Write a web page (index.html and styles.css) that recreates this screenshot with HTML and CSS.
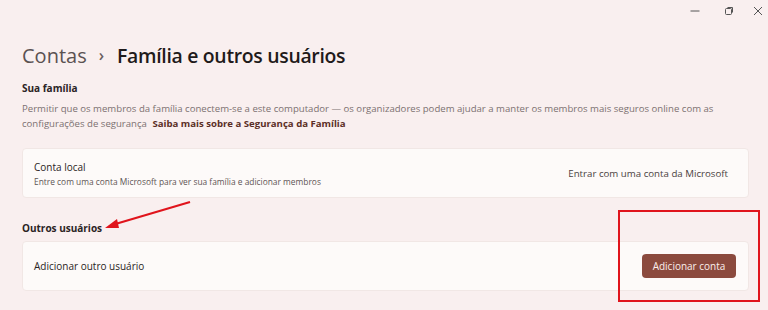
FILE: index.html
```html
<!doctype html>
<html>
<head>
<meta charset="utf-8">
<title>Família e outros usuários</title>
<link rel="stylesheet" href="styles.css">
</head>
<body>
<div class="titlebar">
    <span class="winbtn">
        <svg width="10" height="10" viewBox="0 0 10 10"><path d="M0.5 5H9.5" stroke="#555" stroke-width="1"/></svg>
    </span>
    <span class="winbtn">
        <svg width="10" height="10" viewBox="0 0 10 10"><rect x="1.5" y="2.5" width="6" height="6" rx="1" fill="none" stroke="#555"/><path d="M3.5 1.5H8.5V6.5" fill="none" stroke="#555"/></svg>
    </span>
    <span class="winbtn">
        <svg width="10" height="10" viewBox="0 0 10 10"><path d="M1 1L9 9M9 1L1 9" stroke="#555" stroke-width="1"/></svg>
    </span>
</div>
<div class="page">
    <h1 class="crumbs"><span class="parent">Contas</span><span class="sep">›</span><span class="current">Família e outros usuários</span></h1>

    <h2 class="section">Sua família</h2>
    <p class="desc">Permitir que os membros da família conectem-se a este computador — os organizadores podem ajudar a manter os membros mais seguros online com as configurações de segurança <a href="#">Saiba mais sobre a Segurança da Família</a></p>

    <div class="card first">
        <div>
            <div class="card_title">Conta local</div>
            <div class="card_sub">Entre com uma conta Microsoft para ver sua família e adicionar membros</div>
        </div>
        <a class="card_link" href="#">Entrar com uma conta da Microsoft</a>
    </div>

    <h2 class="section others">Outros usuários</h2>
    <div class="card">
        <div class="card_title">Adicionar outro usuário</div>
        <button class="add_btn">Adicionar conta</button>
    </div>
</div>
<!-- anotações por cima da captura -->
<svg class="marks" width="768" height="310" viewBox="0 0 768 310">
    <path d="M190 202L112 225" stroke="#e0141c" stroke-width="2.2" fill="none"/>
    <path d="M105 228L117 219L119 228Z" fill="#e0141c"/>
    <rect x="619" y="211" width="140" height="90" fill="none" stroke="#e0141c" stroke-width="2"/>
</svg>
</body>
</html>
```
FILE: styles.css
```css
* {margin: 0; padding: 0; box-sizing: border-box;}
body {
    background: #f9efef;
    font-family: "Open Sans", "Noto Sans", sans-serif;
    color: #1f1a1a;
    width: 768px;
    height: 310px;
    overflow: hidden;
}
.titlebar {
    display: flex;
    justify-content: flex-end;
    height: 24px;
    padding-top: 6px;
}
.winbtn {
    width: 34px;
    display: flex;
    justify-content: center;
}
.winbtn:last-child {
    width: 22px;
    justify-content: flex-start;
    padding-left: 7px;
}
.page {
    padding: 0 19px 0 22px;
}
.crumbs {
    font-size: 20px;
    font-weight: 600;
    line-height: 28px;
    margin-top: 18px;
}
.crumbs .parent {
    color: #5b5252;
    font-weight: 500;
}
.crumbs .sep {
    color: #6a6060;
    font-size: 16px;
    margin: 0 13px 0 12px;
    position: relative;
    top: -2px;
}
.crumbs .current {
    font-size: 19.4px;
    letter-spacing: -0.3px;
}
.section {
    font-size: 10px;
    font-weight: 700;
    line-height: 14px;
    margin-top: 10px;
    color: #2b2424;
}
.desc {
    font-size: 9.6px;
    line-height: 15px;
    color: #7c7171;
    margin-top: 6px;
    width: 700px;
}
.desc a {
    color: #5b2e26;
    font-weight: 700;
    text-decoration: none;
    margin-left: 3px;
}
.card {
    background: #fdfaf9;
    border: 1px solid #f1e7e5;
    border-radius: 4px;
    display: flex;
    justify-content: space-between;
    align-items: center;
    height: 50px;
    padding: 0 12px 0 11px;
    margin-top: 13px;
}
.card.first {
    margin-top: 17px;
}
.card_title {
    font-size: 10px;
    color: #2b2424;
}
.card_sub {
    font-size: 8.4px;
    color: #5e5555;
    margin-top: 2px;
}
.card_link {
    font-size: 9.7px;
    color: #4a3f3f;
    text-decoration: none;
    margin-right: 8px;
}
.others {
    margin-top: 23px;
}
.others + .card {
    margin-top: 6px;
}
.add_btn {
    background: #8b4a3e;
    color: #fbefec;
    border: none;
    border-radius: 4px;
    font-family: inherit;
    font-size: 10px;
    width: 94px;
    height: 24px;
}
.marks {
    position: absolute;
    left: 0;
    top: 0;
    pointer-events: none;
}
```
